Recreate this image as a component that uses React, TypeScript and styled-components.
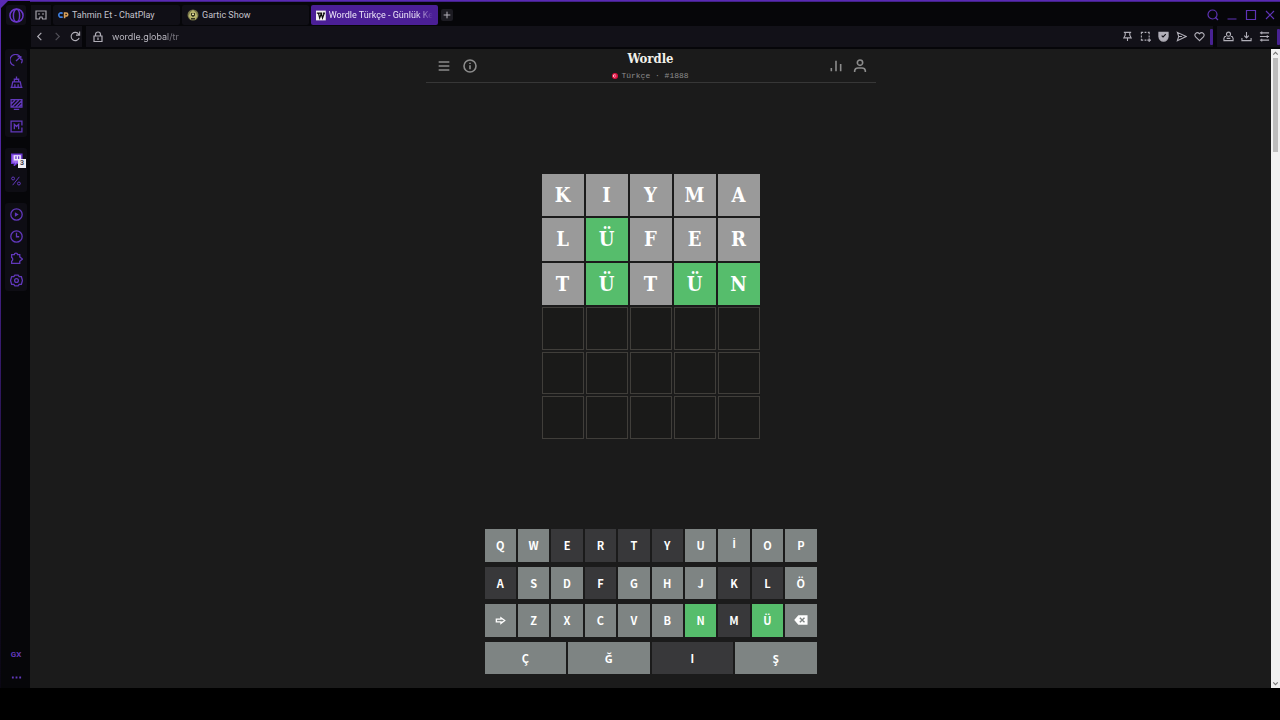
import React from "react";
import styled, { createGlobalStyle, css } from "styled-components";

const ui = `Roboto, Inter, "Liberation Sans", sans-serif`;
const serif = `"DejaVu Serif Condensed", "DejaVu Serif", "Liberation Serif", serif`;
const keyFont = `"Noto Sans CJK SC", "Noto Sans", sans-serif`;
const dottedKeyFont = `Roboto, "Liberation Sans", sans-serif`;
const mono = `"Liberation Mono", "DejaVu Sans Mono", monospace`;

const Global = createGlobalStyle`
  * { box-sizing: border-box; }
  body { margin: 0; background: #000; font-family: ${ui}; }
  button { border: 0; padding: 0; background: none; color: inherit; font: inherit; cursor: pointer; }
`;

const Screen = styled.div`
  min-height: 100vh;
  padding-bottom: 32px;
  display: flex;
  flex-direction: column;
`;

const Frame = styled.div`
  flex: 1;
  display: flex;
  flex-direction: column;
  padding: 1px 0 0 1px;
  background: linear-gradient(#5a2ab4, #4a2391 35%, #160c2b 80%, #0a0712);
`;

const BrowserWindow = styled.div`
  flex: 1;
  display: grid;
  grid-template-columns: 29px minmax(0, 1fr);
  grid-template-rows: 25px 23px minmax(0, 1fr);
  background: #060609;
  clip-path: polygon(7px 0, 100% 0, 100% 100%, 0 100%, 0 7px);
`;

const Corner = styled.div`
  grid-row: 1 / 3;
  padding: 4px 3px 0 5px;
`;

const OperaButton = styled.button`
  display: grid;
  place-items: center;
  width: 20px;
  height: 20px;
  border-radius: 3px;
  background: #100f17;
  color: #6a37cc;
`;

const TabStrip = styled.div`
  display: flex;
  align-items: center;
  gap: 2px;
  padding: 2px 0 0 1px;
  border-top: 1px solid #43218a;
`;

const SquareButton = styled.button<{ $w: number }>`
  display: grid;
  place-items: center;
  width: ${(p) => p.$w}px;
  height: 20px;
  background: #100f16;
  color: #a3a1aa;
`;

const Tab = styled.button<{ $active?: boolean }>`
  display: flex;
  align-items: center;
  gap: 3px;
  width: 127px;
  height: 20px;
  padding: 0 5px;
  border-radius: 2px;
  text-align: left;
  background: ${(p) => (p.$active ? "#4b1f96" : "#100f16")};
  color: ${(p) => (p.$active ? "#ece5f8" : "#c4c2cb")};
`;

const TabTitle = styled.span<{ $fade?: boolean }>`
  flex: 1;
  white-space: nowrap;
  font-size: 9px;
  line-height: 12px;
  font-weight: 400;
  ${(p) =>
    p.$fade &&
    css`
      mask-image: linear-gradient(90deg, #000 84%, transparent);
    `}
`;

const NewTab = styled.button`
  display: grid;
  place-items: center;
  width: 12px;
  height: 12px;
  margin-left: 1px;
  border-radius: 2px;
  background: #1c1b22;
  color: #b5b3bc;
`;

const WindowControls = styled.div`
  display: flex;
  gap: 5px;
  margin-left: auto;
  padding-right: 3px;
  color: #5e33b5;
`;

const IconButton = styled.button<{ $w?: number; $dim?: boolean }>`
  display: grid;
  place-items: center;
  width: ${(p) => p.$w ?? 14}px;
  height: 18px;
  opacity: ${(p) => (p.$dim ? 0.4 : 1)};
`;

const AddressRow = styled.div`
  display: flex;
  gap: 4px;
  padding: 0 0 2px 1px;
  color: #b1afb8;
`;

const Segment = styled.div<{ $grow?: boolean }>`
  display: flex;
  align-items: center;
  gap: 4px;
  flex: ${(p) => (p.$grow ? "1" : "none")};
  padding-left: ${(p) => (p.$grow ? 5 : 2)}px;
  background: #121118;
`;

const AddressInput = styled.input`
  flex: 1;
  min-width: 0;
  height: 18px;
  padding: 0;
  margin-left: 3px;
  border: 0;
  outline: 0;
  font-family: Inter, ${ui};
  font-size: 9px;
  color: #b9b7c0;
  background: linear-gradient(90deg, #c6c4cd 56px, #7d7b84 56px);
  background-clip: text;
  -webkit-text-fill-color: transparent;
`;

const PanelMark = styled.span`
  width: 3px;
  height: 16px;
  border-radius: 1px;
  background: #482293;
`;

const Sidebar = styled.nav`
  display: flex;
  flex-direction: column;
  gap: 11px;
  padding: 0 3px 0 4px;
  color: #6138bb;
`;

const SideGroup = styled.div<{ $last?: boolean }>`
  display: flex;
  flex-direction: column;
  align-items: center;
  border-radius: 3px;
  margin-top: ${(p) => (p.$last ? "auto" : "0")};
  background: ${(p) => (p.$last ? "none" : "#0e0d14")};
`;

const SideButton = styled.button`
  position: relative;
  display: grid;
  place-items: center;
  width: 22px;
  height: 22px;
  font-size: 8px;
  line-height: 10px;
  font-weight: 700;
`;

const Badge = styled.span`
  position: absolute;
  right: 1px;
  bottom: 2px;
  width: 8px;
  height: 9px;
  background: #efedf4;
  color: #45434c;
  font-size: 7px;
  line-height: 9px;
`;

const Viewport = styled.div`
  display: flex;
  background: #1b1b1b;
`;

const Game = styled.main`
  flex: 1;
  display: flex;
  flex-direction: column;
  align-items: center;
  padding-bottom: 14px;
`;

const Header = styled.header`
  display: grid;
  grid-template-columns: 1fr auto 1fr;
  width: 100%;
  max-width: 450px;
  height: 34px;
  border-bottom: 1px solid #373737;
  color: #8c8c8c;
`;

const HeaderSide = styled.div<{ $end?: boolean }>`
  display: flex;
  align-items: center;
  justify-content: ${(p) => (p.$end ? "flex-end" : "flex-start")};
  gap: ${(p) => (p.$end ? 8 : 10)}px;
  padding: 1px 8px 0 10px;
`;

const Brand = styled.div`
  display: flex;
  flex-direction: column;
  align-items: center;
`;

const Title = styled.h1`
  margin: 0;
  font-family: ${serif};
  font-size: 13px;
  line-height: 19px;
  font-weight: 700;
  color: #f2f1ea;
`;

const Edition = styled.p`
  display: flex;
  align-items: center;
  gap: 3px;
  margin: 2px 0 0;
  font-family: ${mono};
  font-size: 8px;
  line-height: 12px;
  color: #8c8c8c;
`;

const BoardArea = styled.section`
  flex: 1;
  display: grid;
  place-items: center;
  padding: 24px 0;
`;

const Board = styled.div`
  display: grid;
  grid-template-columns: repeat(5, 1fr);
  grid-template-rows: repeat(6, 1fr);
  gap: 2px;
  width: 218px;
  height: 265px;
`;

type State = "absent" | "correct" | "empty" | "idle" | "used";

const Tile = styled.div<{ $state: State }>`
  display: grid;
  place-items: center;
  font-family: ${serif};
  font-size: 20px;
  line-height: 24px;
  font-weight: 700;
  color: #fff;
  background: ${(p) => (p.$state === "correct" ? "#56bd6c" : p.$state === "absent" ? "#9a9a9a" : "#1a1a19")};
  border: ${(p) => (p.$state === "empty" ? "1px solid #403e3a" : "0")};
`;

const Keyboard = styled.div`
  display: flex;
  flex-direction: column;
  gap: 5px;
  width: 332px;
  height: 145px;
`;

const KeyRow = styled.div`
  flex: 1;
  display: flex;
  gap: 2px;
`;

const keyColor: Record<string, string> = { idle: "#7e8483", used: "#38383a", correct: "#56bd6c" };

const Key = styled.button<{ $state: State; $dotted?: boolean }>`
  flex: 1 1 0;
  display: grid;
  place-items: center;
  font-family: ${(p) => (p.$dotted ? dottedKeyFont : keyFont)};
  font-size: 11px;
  line-height: 16px;
  font-weight: 700;
  color: #fff;
  background: ${(p) => keyColor[p.$state]};
`;

const Scrollbar = styled.div`
  display: flex;
  flex-direction: column;
  align-items: center;
  width: 9px;
  background: #f1f1f1;
  color: #777;
`;

const Thumb = styled.div`
  width: 5px;
  height: 94px;
  background: #bdbdbd;
`;

const ScrollGap = styled.div`
  flex: 1;
`;

type IconProps = { size?: number; sw?: number; children: React.ReactNode };

const Icon = ({ size = 12, sw = 2.4, children }: IconProps) => (
  <svg
    width={size}
    height={size}
    viewBox="0 0 24 24"
    fill="none"
    stroke="currentColor"
    strokeWidth={sw}
    aria-hidden="true"
  >
    {children}
  </svg>
);

const ChatPlayIcon = () => (
  <svg width="11" height="12" viewBox="0 0 11 12" fill="none" strokeWidth="1.6" aria-hidden="true">
    <path d="M4.600 4.600A2.200 2.200 0 1 0 4.600 7.600" stroke="#3d7fe0" />
    <path d="M6.600 9.200V4H8.200A1.500 1.500 0 0 1 8.200 7H6.600" stroke="#d8a05a" />
  </svg>
);

const GarticIcon = () => (
  <svg width="12" height="12" viewBox="0 0 24 24" aria-hidden="true">
    <circle cx="12" cy="12" r="11" fill="#77754a" />
    <path d="M6 7L12 2L18 7L21 14L17 21H7L3 14Z" fill="#b5b36c" />
    <path d="M8 8H16V13L12 16L8 13ZM8 18H16V21H8Z" fill="#34351f" />
    <path d="M10 9H14V12H10Z" fill="#e8e3a6" />
  </svg>
);

const WordleFavicon = () => (
  <svg width="11" height="11" viewBox="0 0 24 24" aria-hidden="true">
    <rect width="24" height="24" fill="#f4f2f2" />
    <path
      d="M2 6H10M6 6L9 18L13 7M10 6H15M13 7L16 18L20 7M17 6H22"
      fill="none"
      stroke="#0c0c0c"
      strokeWidth="3"
    />
  </svg>
);

const FlagIcon = () => (
  <svg width="6" height="6" viewBox="0 0 14 14" aria-hidden="true">
    <circle cx="7" cy="7" r="7" fill="#e00f40" />
    <circle cx="6" cy="7" r="3.4" fill="#fff" />
    <circle cx="7" cy="7" r="2.6" fill="#e00f40" />
    <circle cx="9" cy="7" r="1.1" fill="#fff" />
  </svg>
);

const sideGroups: { label: string; icon: React.ReactNode; badge?: string }[][] = [
  [
    {
      label: "GX Control",
      icon: (
        <Icon size={13}>
          <path d="M8 21.500A10.500 10.500 0 1 1 18 4M22 9A10.500 10.500 0 0 1 21 17M11 13L20 5M14 5H20V11" />
        </Icon>
      ),
    },
    {
      label: "GX Cleaner",
      icon: (
        <Icon size={13}>
          <path d="M12 1V7M8 6H16V11H8ZM5 11H19L21 21H3ZM1 21H23M9 15V21M15 15V21" />
        </Icon>
      ),
    },
    {
      label: "Live wallpaper",
      icon: (
        <Icon size={13}>
          <path d="M2 3H22V17H2ZM7 21H17M2 11L9 4M3 17L16 4M10 17L22 5M16 17L22 11" />
        </Icon>
      ),
    },
    {
      label: "Mods",
      icon: (
        <Icon size={13}>
          <path d="M22 14V22H2V2H22V10M8 17V8L12 12L16 8V17" />
        </Icon>
      ),
    },
  ],
  [
    {
      label: "Twitch",
      badge: "3",
      icon: (
        <Icon size={13}>
          <path d="M3 2H22V15L17 19H13L8 23V19H3Z" fill="#a06df0" stroke="#6a38d0" />
          <path d="M7 4H20V14H7Z" fill="#eee6fb" stroke="none" />
          <path d="M11 6V11M16 6V11" stroke="#6a38d0" />
        </Icon>
      ),
    },
    {
      label: "Deals",
      icon: (
        <Icon size={10}>
          <circle cx="5" cy="6" r="3.500" />
          <circle cx="19" cy="18" r="3.500" />
          <path d="M20 2L4 22" />
        </Icon>
      ),
    },
  ],
  [
    {
      label: "Player",
      icon: (
        <Icon size={13}>
          <circle cx="12" cy="12" r="10.500" />
          <path d="M9 8V16L16 12Z" fill="currentColor" stroke="none" />
        </Icon>
      ),
    },
    {
      label: "History",
      icon: (
        <Icon size={13}>
          <circle cx="12" cy="12" r="10.500" />
          <path d="M12 5V12.500H17" />
        </Icon>
      ),
    },
    {
      label: "Extensions",
      icon: (
        <Icon size={13}>
          <path d="M3 5H8A3 3 0 0 1 14 5H18V9L23 13L18 17V21H3V17A4 4 0 0 0 3 10Z" />
        </Icon>
      ),
    },
    {
      label: "Settings",
      icon: (
        <Icon size={13}>
          <path d="M9 2H15L17 5H21L23 12L21 19H17L15 22H9L7 19H3L1 12L3 5H7Z" />
          <circle cx="12" cy="12" r="3.500" />
        </Icon>
      ),
    },
  ],
];

const toolIcons: { label: string; icon: React.ReactNode }[] = [
  { label: "Pin", icon: <path d="M4 3H20M7 3V9L4 15H20L17 9V3M12 15V22" /> },
  {
    label: "Snapshot",
    icon: <path d="M3 7V3H7M10 3H14M17 3H20V7M20 10V14M3 10V14M3 17V20H7M10 20H14M16 20H24M20 16V24" />,
  },
  {
    label: "Ad blocker",
    icon: (
      <>
        <path d="M2 3H22V12A10 10 0 0 1 2 12Z" fill="currentColor" />
        <path d="M8 10L11 13L17 7" stroke="#121118" />
      </>
    ),
  },
  { label: "Send", icon: <path d="M3 3L22 12L3 21L6 12ZM6 12H13" /> },
  {
    label: "Favorites",
    icon: <path d="M12 21L3.500 13C-1 7 6 0 12 6C18 0 25 7 20.500 13Z" />,
  },
];

const guesses = ["KIYMA", "LÜFER", "TÜTÜN", "", "", ""];
const solved = ["00000", "01000", "01011"];

const keyRows = [
  ["Q", "W", "E", "R", "T", "Y", "U", "İ", "O", "P"],
  ["A", "S", "D", "F", "G", "H", "J", "K", "L", "Ö"],
  ["⇨", "Z", "X", "C", "V", "B", "N", "M", "Ü", "⌫"],
  ["Ç", "Ğ", "I", "Ş"],
];
const keyState = (k: string): State => ("NÜ".includes(k) ? "correct" : "ERTYAFKLMI".includes(k) ? "used" : "idle");

const keyFace = (k: string) => {
  if (k === "⇨")
    return (
      <Icon size={11} sw={3}>
        <path d="M3 9H13V6L21 12L13 18V15H3Z" />
      </Icon>
    );
  if (k === "⌫")
    return (
      <Icon size={14}>
        <path d="M2 12L8 5H22V19H8Z" fill="currentColor" />
        <path d="M10 8L18 16M18 8L10 16" stroke="#7e8483" />
      </Icon>
    );
  return k;
};

const keyLabel: Record<string, string> = { "⇨": "Enter", "⌫": "Backspace" };

export default function App() {
  return (
    <Screen>
      <Global />
      <Frame>
        <BrowserWindow>
          <Corner>
            <OperaButton aria-label="Menu">
              <Icon size={15}>
                <circle cx="12" cy="12" r="10.500" />
                <ellipse cx="12" cy="12" rx="5" ry="10" />
              </Icon>
            </OperaButton>
          </Corner>

          <TabStrip>
            <SquareButton $w={20} aria-label="GX Corner">
              <Icon size={12}>
                <path d="M2 4H22V20H15L14 16H10L9 20H2ZM6 10H10M14 10H18" />
              </Icon>
            </SquareButton>
            <Tab>
              <ChatPlayIcon />
              <TabTitle>Tahmin Et - ChatPlay</TabTitle>
            </Tab>
            <Tab>
              <GarticIcon />
              <TabTitle>Gartic Show</TabTitle>
            </Tab>
            <Tab $active>
              <WordleFavicon />
              <TabTitle $fade>Wordle Türkçe - Günlük Ke</TabTitle>
            </Tab>
            <NewTab aria-label="New tab">
              <Icon size={8} sw={3}>
                <path d="M12 2V22M2 12H22" />
              </Icon>
            </NewTab>
            <WindowControls>
              <IconButton aria-label="Search tabs">
                <Icon size={12}>
                  <circle cx="11" cy="11" r="9" />
                  <path d="M16 16L22 22" />
                </Icon>
              </IconButton>
              <IconButton aria-label="Minimize">
                <Icon size={12}>
                  <path d="M3 20H21" />
                </Icon>
              </IconButton>
              <IconButton aria-label="Maximize">
                <Icon size={12}>
                  <path d="M3 3H21V21H3Z" />
                </Icon>
              </IconButton>
              <IconButton aria-label="Close">
                <Icon size={12}>
                  <path d="M4 4L20 20M20 4L4 20" />
                </Icon>
              </IconButton>
            </WindowControls>
          </TabStrip>

          <AddressRow>
            <Segment>
              <IconButton $w={13} aria-label="Back">
                <Icon size={11}>
                  <path d="M16 4L8 12L16 20" />
                </Icon>
              </IconButton>
              <IconButton $w={14} $dim aria-label="Forward">
                <Icon size={11}>
                  <path d="M8 4L16 12L8 20" />
                </Icon>
              </IconButton>
              <IconButton $w={14} aria-label="Reload">
                <Icon size={11}>
                  <path d="M20 15A9 9 0 1 1 19 7L21 9M21 1V9H13" />
                </Icon>
              </IconButton>
            </Segment>
            <Segment $grow>
              <IconButton aria-label="Site information">
                <Icon size={12}>
                  <path d="M4 10H20V21H4ZM7 10V7A5 5 0 0 1 17 7V10M12 13V18" />
                </Icon>
              </IconButton>
              <AddressInput aria-label="Address" defaultValue="wordle.global/tr" />
              {toolIcons.map((t) => (
                <IconButton key={t.label} aria-label={t.label}>
                  <Icon size={11}>{t.icon}</Icon>
                </IconButton>
              ))}
              <PanelMark />
            </Segment>
            <Segment>
              <IconButton aria-label="Profile" $w={18}>
                <Icon size={11}>
                  <circle cx="12" cy="7" r="4.500" />
                  <path d="M7 12H4L2 16V21H22V16L20 12H17M8 16H16" />
                </Icon>
              </IconButton>
              <IconButton aria-label="Downloads" $w={10}>
                <Icon size={11}>
                  <path d="M12 2V15M7 10L12 15L17 10M2 15V21H22V15" />
                </Icon>
              </IconButton>
              <IconButton aria-label="Easy setup" $w={18}>
                <Icon size={11}>
                  <path d="M2 4H22M2 12H22M2 20H22M6 1V7M18 9V15M6 17V23" />
                </Icon>
              </IconButton>
              <PanelMark />
            </Segment>
          </AddressRow>

          <Sidebar aria-label="Sidebar">
            {sideGroups.map((group, i) => (
              <SideGroup key={i}>
                {group.map((item) => (
                  <SideButton key={item.label} aria-label={item.label}>
                    {item.icon}
                    {item.badge && <Badge>{item.badge}</Badge>}
                  </SideButton>
                ))}
              </SideGroup>
            ))}
            <SideGroup $last>
              <SideButton>GX</SideButton>
              <SideButton aria-label="More">
                <Icon size={11} sw={4}>
                  <path d="M2 12H6M10 12H14M18 12H22" />
                </Icon>
              </SideButton>
            </SideGroup>
          </Sidebar>

          <Viewport>
            <Game>
              <Header>
                <HeaderSide>
                  <IconButton $w={16} aria-label="Menu">
                    <Icon size={16}>
                      <path d="M4 6H20M4 12H20M4 18H20" />
                    </Icon>
                  </IconButton>
                  <IconButton $w={16} aria-label="Help">
                    <Icon size={16}>
                      <circle cx="12" cy="12" r="9" />
                      <path d="M12 11V17M12 7V9" />
                    </Icon>
                  </IconButton>
                </HeaderSide>
                <Brand>
                  <Title>Wordle</Title>
                  <Edition>
                    <FlagIcon />
                    Türkçe · #1888
                  </Edition>
                </Brand>
                <HeaderSide $end>
                  <IconButton $w={16} aria-label="Statistics">
                    <Icon size={16}>
                      <path d="M5 20V15M12 20V4M19 20V9" />
                    </Icon>
                  </IconButton>
                  <IconButton $w={16} aria-label="Account">
                    <Icon size={16}>
                      <circle cx="12" cy="7" r="4" />
                      <path d="M4 21V19A5 5 0 0 1 9 15H15A5 5 0 0 1 20 19V21" />
                    </Icon>
                  </IconButton>
                </HeaderSide>
              </Header>

              <BoardArea>
                <Board>
                  {guesses.map((word, r) =>
                    Array.from({ length: 5 }, (_, c) => (
                      <Tile key={`${r}-${c}`} $state={!word ? "empty" : solved[r][c] === "1" ? "correct" : "absent"}>
                        {word[c]}
                      </Tile>
                    ))
                  )}
                </Board>
              </BoardArea>

              <Keyboard>
                {keyRows.map((row, i) => (
                  <KeyRow key={i}>
                    {row.map((k) => (
                      <Key key={k} $state={keyState(k)} $dotted={k === "İ"} aria-label={keyLabel[k]}>
                        {keyFace(k)}
                      </Key>
                    ))}
                  </KeyRow>
                ))}
              </Keyboard>
            </Game>
            <Scrollbar aria-hidden="true">
              <Icon size={9} sw={3}>
                <path d="M6 15L12 9L18 15" />
              </Icon>
              <Thumb />
              <ScrollGap />
              <Icon size={9} sw={3}>
                <path d="M6 9L12 15L18 9" />
              </Icon>
            </Scrollbar>
          </Viewport>
        </BrowserWindow>
      </Frame>
    </Screen>
  );
}
